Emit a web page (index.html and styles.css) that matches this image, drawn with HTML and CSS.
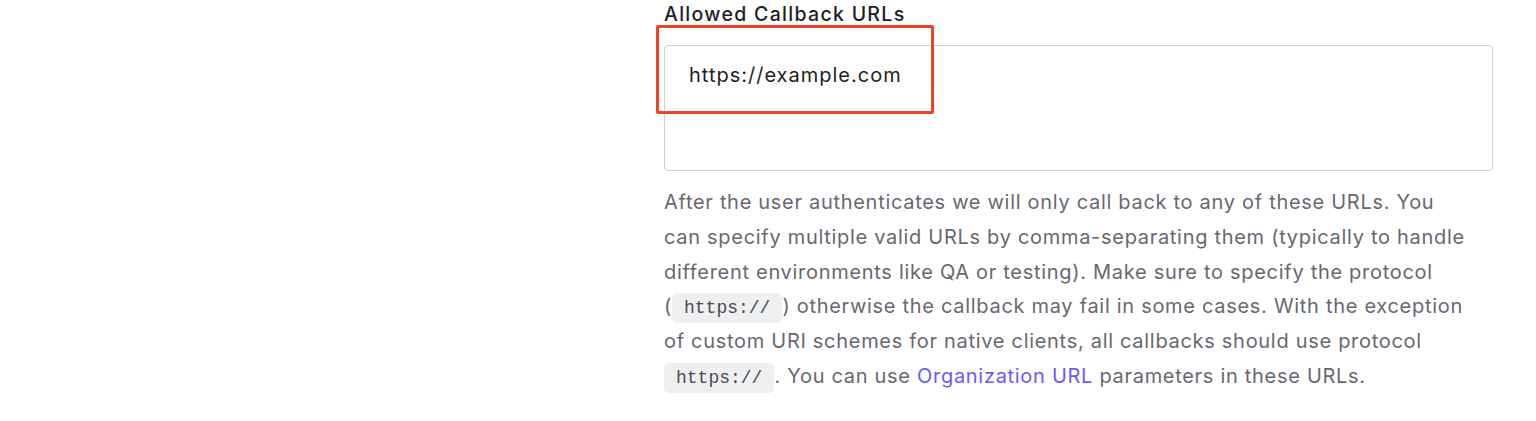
FILE: index.html
```html
<!DOCTYPE html>
<html lang="en">
<head>
    <meta charset="UTF-8">
    <title>Application URIs</title>
    <link rel="stylesheet" href="styles.css">
</head>
<body>

    <!-- Callback URLs field -->
    <section class="field">
        <label class="field-label" for="callbacks">Allowed Callback URLs</label>
        <div class="field-box">
            <textarea id="callbacks" class="field-input">https://example.com</textarea>
            <span class="highlight"></span>
        </div>
        <p class="field-help">
            After the user authenticates we will only call back to any of these URLs. You
            can specify multiple valid URLs by comma-separating them (typically to handle
            different environments like QA or testing). Make sure to specify the protocol
            (<code>https://</code>) otherwise the callback may fail in some cases. With the exception
            of custom URI schemes for native clients, all callbacks should use protocol
            <code>https://</code>. You can use <a href="#">Organization URL</a> parameters in these URLs.
        </p>
    </section>

</body>
</html>
```

FILE: styles.css
```css
body {
    margin: 0;
    padding: 0;
    background: #fff;
    font-family: Inter, 'Noto Sans', sans-serif;
    color: #1f1f23;
}

.field {
    width: 829px;
    margin-left: 664px;
}

.field-label {
    display: block;
    font-size: 19.5px;
    font-weight: 500;
    letter-spacing: 1.3px;
    line-height: 28px;
    color: #1e1e22;
    margin-bottom: 17px;
}

.field-box {
    position: relative;
}

.field-input {
    display: block;
    box-sizing: border-box;
    width: 100%;
    height: 126px;
    margin: 0;
    padding: 15px 24px;
    border: 1px solid #cfcfd3;
    border-radius: 4px;
    font-family: Inter, 'Noto Sans', sans-serif;
    font-size: 20px;
    letter-spacing: 1px;
    line-height: 28px;
    color: #1e1e22;
    resize: none;
    outline: none;
}

/* annotation drawn over the input */
.highlight {
    position: absolute;
    left: -8px;
    top: -20px;
    width: 272px;
    height: 83px;
    border: 3px solid #e9432b;
    border-radius: 2px;
}

.field-help {
    width: 808px;
    margin: 14px 0 0;
    font-size: 20px;
    letter-spacing: 0.7px;
    line-height: 34.8px;
    color: #67686f;
}

.field-help code {
    font-family: 'Liberation Mono', monospace;
    font-size: 18px;
    line-height: 1;
    letter-spacing: 0;
    color: #4a4b52;
    background: #eeeff1;
    border-radius: 5px;
    padding: 5px 12px;
}

.field-help a {
    color: #635dff;
    text-decoration: none;
}
```
